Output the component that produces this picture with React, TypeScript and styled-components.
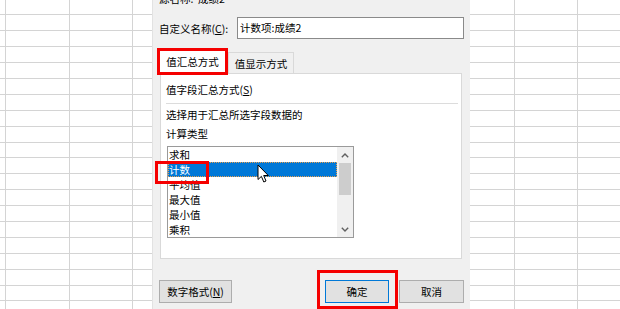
import React from 'react';
import styled, { createGlobalStyle } from 'styled-components';

const GlobalStyle = createGlobalStyle`
  html, body {
    margin: 0;
    padding: 0;
  }
  body {
    width: 620px;
    height: 309px;
    overflow: hidden;
    background: #ffffff;
    font-family: "Noto Sans CJK SC", "Liberation Sans", sans-serif;
  }
`;

const Screen = styled.div`
  position: relative;
  width: 620px;
  height: 309px;
  overflow: hidden;
  background: #ffffff;
`;

const Sheet = styled.div`
  display: grid;
  grid-template-columns: 6px repeat(10, 63.6px);
  grid-template-rows: 15.4px repeat(19, 15.9px);
`;

const Cell = styled.div`
  box-sizing: border-box;
  border-right: 1px solid #d4d4d4;
  border-bottom: 1px solid #d4d4d4;
`;

const Dialog = styled.div`
  position: absolute;
  left: 152px;
  top: -14px;
  width: 318px;
  height: 340px;
  box-sizing: border-box;
  padding: 5px 6px 0 6px;
  background: #f0f0f0;
  border-left: 1px solid #e2e2e2;
  display: flex;
  flex-direction: column;
  font-size: 10.5px;
  color: #000000;
`;

const TextLine = styled.div<{ $top?: number }>`
  height: 16px;
  line-height: 16px;
  margin-top: ${(p) => p.$top ?? 0}px;
  white-space: nowrap;
`;

const NameRow = styled.div`
  display: flex;
  align-items: center;
  height: 22px;
  margin-top: 10px;
`;

const Label = styled.span`
  flex: 0 0 78px;
  white-space: nowrap;
`;

const NameInput = styled.div`
  flex: 1;
  height: 22px;
  box-sizing: border-box;
  border: 1px solid #8a8a8a;
  background: #ffffff;
  padding-left: 2px;
  line-height: 20px;
`;

const TabStrip = styled.div`
  display: flex;
  align-items: flex-end;
  height: 25px;
  margin-top: 9px;
  padding-left: 1px;
`;

const Tab = styled.div<{ $active?: boolean }>`
  position: relative;
  box-sizing: border-box;
  display: flex;
  align-items: center;
  justify-content: center;
  white-space: nowrap;
  width: ${(p) => (p.$active ? 71 : 66)}px;
  height: ${(p) => (p.$active ? 27 : 21)}px;
  margin-left: ${(p) => (p.$active ? -3 : 0)}px;
  margin-bottom: ${(p) => (p.$active ? -2 : 0)}px;
  background: ${(p) => (p.$active ? '#ffffff' : '#f0f0f0')};
  border: ${(p) => (p.$active ? '3px solid #f50000' : '1px solid #d9d9d9')};
  border-bottom: ${(p) => (p.$active ? '3px solid #f50000' : 'none')};
  z-index: ${(p) => (p.$active ? 2 : 1)};
`;

const Panel = styled.div`
  height: 186px;
  box-sizing: border-box;
  margin: 0 2px 0 1px;
  padding: 0 3px 0 5px;
  background: #ffffff;
  border: 1px solid #d9d9d9;
  display: flex;
  flex-direction: column;
`;

const Separator = styled.div`
  height: 1px;
  margin-top: 5px;
  background: #dcdcdc;
`;

const ListBox = styled.div`
  position: relative;
  width: 187px;
  height: 92px;
  margin: 4px 0 0 1px;
  box-sizing: border-box;
  border: 1px solid #9a9a9a;
  background: #ffffff;
  display: flex;
`;

const Items = styled.div`
  flex: 1;
  display: flex;
  flex-direction: column;
`;

const Item = styled.div<{ $selected?: boolean }>`
  height: 15px;
  line-height: 15px;
  padding-left: 1px;
  box-sizing: border-box;
  white-space: nowrap;
  background: ${(p) => (p.$selected ? '#0078d7' : 'transparent')};
  color: ${(p) => (p.$selected ? '#ffffff' : '#000000')};
  outline: ${(p) => (p.$selected ? '1px dotted #e8a050' : 'none')};
  outline-offset: -1px;
`;

const ScrollBar = styled.div`
  width: 16px;
  background: #f0f0f0;
  display: flex;
  flex-direction: column;
`;

const ArrowBox = styled.div`
  height: 16px;
  display: flex;
  align-items: center;
  justify-content: center;
`;

const Thumb = styled.div`
  height: 32px;
  margin: 0 2px;
  background: #cdcdcd;
`;

const Track = styled.div`
  flex: 1;
`;

const Highlight = styled.div<{ $l: number; $t: number; $w: number; $h: number }>`
  position: absolute;
  left: ${(p) => p.$l}px;
  top: ${(p) => p.$t}px;
  width: ${(p) => p.$w}px;
  height: ${(p) => p.$h}px;
  box-sizing: border-box;
  border: 3px solid #f50000;
  pointer-events: none;
  z-index: 3;
`;

const Cursor = styled.svg`
  position: absolute;
  left: 89px;
  top: 17px;
  z-index: 4;
`;

const ButtonRow = styled.div`
  display: flex;
  align-items: center;
  margin-top: 21px;
`;

const Button = styled.div<{ $w: number; $primary?: boolean }>`
  position: relative;
  width: ${(p) => p.$w}px;
  height: 23px;
  box-sizing: border-box;
  border: 1px solid ${(p) => (p.$primary ? '#0078d7' : '#adadad')};
  background: #e1e1e1;
  display: flex;
  align-items: center;
  justify-content: center;
  white-space: nowrap;
`;

const Spacer = styled.div`
  flex: 1;
`;

const Chevron = ({ up }: { up?: boolean }) => (
  <svg width="8" height="5" viewBox="0 0 8 5">
    <path
      d={up ? 'M0.8 4.2 L4 1 L7.2 4.2' : 'M0.8 0.8 L4 4 L7.2 0.8'}
      fill="none"
      stroke="#606060"
      strokeWidth="1.4"
    />
  </svg>
);

const items = ['求和', '计数', '平均值', '最大值', '最小值', '乘积'];

export default function App() {
  const cells = Array.from({ length: 11 * 20 });
  return (
    <Screen>
      <GlobalStyle />
      <Sheet>
        {cells.map((_, i) => (
          <Cell key={i} />
        ))}
      </Sheet>
      <Dialog>
        <TextLine>源名称:&nbsp; 成绩2</TextLine>
        <NameRow>
          <Label>
            自定义名称(<u>C</u>):
          </Label>
          <NameInput>计数项:成绩2</NameInput>
        </NameRow>
        <TabStrip>
          <Tab $active>值汇总方式</Tab>
          <Tab>值显示方式</Tab>
        </TabStrip>
        <Panel>
          <TextLine $top={8}>
            值字段汇总方式(<u>S</u>)
          </TextLine>
          <Separator />
          <TextLine $top={3}>选择用于汇总所选字段数据的</TextLine>
          <TextLine $top={3}>计算类型</TextLine>
          <ListBox>
            <Items>
              {items.map((t, i) => (
                <Item key={t} $selected={i === 1}>
                  {t}
                </Item>
              ))}
            </Items>
            <ScrollBar>
              <ArrowBox>
                <Chevron up />
              </ArrowBox>
              <Thumb />
              <Track />
              <ArrowBox>
                <Chevron />
              </ArrowBox>
            </ScrollBar>
            <Highlight $l={-13} $t={14} $w={54} $h={23} />
            <Cursor width="13" height="20" viewBox="0 0 13 20">
              <path
                d="M1 1 L1 15.5 L4.4 12.4 L6.8 18 L9 17 L6.7 11.5 L11.3 11.5 Z"
                fill="#ffffff"
                stroke="#000000"
                strokeWidth="1"
                strokeLinejoin="round"
              />
            </Cursor>
          </ListBox>
        </Panel>
        <ButtonRow>
          <Button $w={73}>
            数字格式(<u>N</u>)
          </Button>
          <Spacer />
          <Button $w={64} $primary>
            确定
            <Highlight $l={-9} $t={-11} $w={81} $h={39} />
          </Button>
          <Button $w={65} style={{ marginLeft: 10 }}>
            取消
          </Button>
        </ButtonRow>
      </Dialog>
    </Screen>
  );
}
